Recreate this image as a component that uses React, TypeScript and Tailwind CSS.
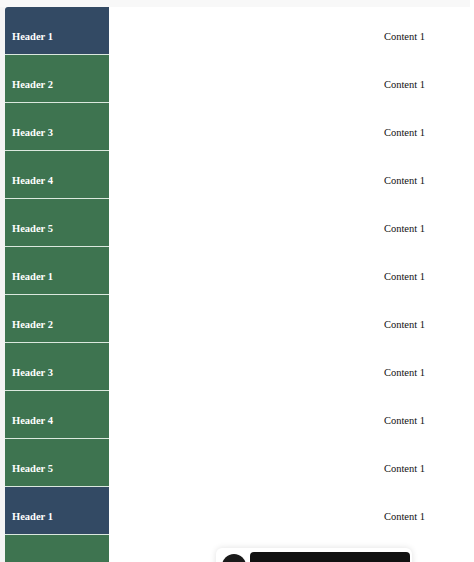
import React from "react";

const rows = [1, 2, 3, 4, 5, 1, 2, 3, 4, 5, 1, 2];

export default function App() {
  return (
    <div className="relative w-[474px] h-[562px] overflow-hidden bg-white" style={{ fontFamily: '"Liberation Serif", "Times New Roman", serif' }}>
      <div className="h-[7px] w-[470px] bg-[#f8f8f8]" />
      <div className="flex">
        <div className="w-[5px] bg-[#f4f4f4]" />
        <div className="flex flex-col">
          {rows.map((n, i) => (
            <div key={i} className="flex h-[48px]">
              <div
                className={`w-[104px] flex items-center pl-[7px] pt-[13px] text-[10.5px] font-bold text-white border-b border-[#dbe8de] ${
                  i % 10 === 0 ? "bg-[#334a64]" : "bg-[#3e7450]"
                } ${i === 0 ? "rounded-tl-[3px]" : ""}`}
              >
                {i < 11 ? `Header ${n}` : ""}
              </div>
              <div className="w-[360px] flex items-center justify-end pr-[44px] pt-[11px] text-[10.5px] text-[#111]">
                {i < 11 ? "Content 1" : ""}
              </div>
            </div>
          ))}
        </div>
      </div>
      <div className="absolute left-[216px] top-[548px] w-[196px] h-[30px] bg-white rounded-[6px] shadow-[0_0_6px_rgba(0,0,0,0.12)] flex items-start gap-[4px] pl-[6px] pt-[4px]">
        <div className="w-[24px] h-[24px] rounded-full bg-[#1a1a1a] mt-[2px]" />
        <div className="w-[160px] h-[24px] bg-[#111] rounded-[4px]" />
      </div>
    </div>
  );
}
